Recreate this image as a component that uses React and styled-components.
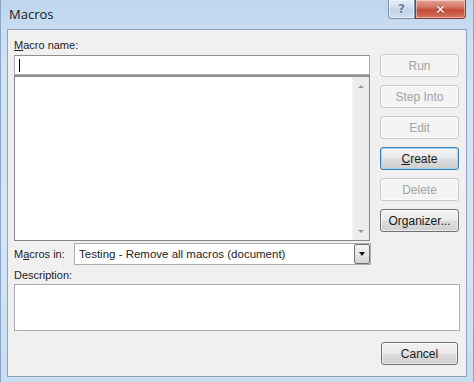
import React from 'react';
import styled, { createGlobalStyle } from 'styled-components';

const Global = createGlobalStyle`
html, body {
  margin: 0;
  padding: 0;
}
body {
  width: 474px;
  height: 382px;
  overflow: hidden;
  font-family: 'Liberation Sans', 'Noto Sans', sans-serif;
  font-size: 11px;
  color: #1e1e1e;
}
`

const Frame = styled.div`
width: 474px;
height: 382px;
box-sizing: border-box;
display: flex;
flex-direction: column;
background: linear-gradient(180deg, #bdd5ee 0%, #cfe1f3 12%, #d7e6f5 60%, #cadcf0 100%);
border-left: 1px solid #8aa6c6;
border-right: 1px solid #8aa6c6;
`

const TitleBar = styled.div`
height: 29px;
display: flex;
align-items: flex-start;
justify-content: space-between;
padding: 0 7px 0 7px;
`

const Title = styled.div`
font-family: 'Open Sans', 'Noto Sans', sans-serif;
font-size: 13px;
line-height: 29px;
color: #1a1a1a;
padding-left: 1px;
`

const Caption = styled.div`
display: flex;
`

const CaptionButton = styled.div`
width: ${p => p.$w}px;
height: 19px;
box-sizing: border-box;
display: flex;
align-items: center;
justify-content: center;
border: 1px solid ${p => p.$close ? '#8a3a34' : '#7d93ad'};
border-top: none;
background: ${p => p.$close
  ? 'linear-gradient(180deg, #e6a394 0%, #d26f5c 45%, #c24a35 55%, #d3765e 100%)'
  : 'linear-gradient(180deg, #e4eef8 0%, #cddced 45%, #bfd1e6 55%, #d4e2f0 100%)'};
border-radius: ${p => p.$close ? '0 0 4px 0' : '0 0 0 4px'};
box-shadow: inset 0 0 0 1px rgba(255,255,255,0.45);
color: ${p => p.$close ? '#ffffff' : '#6b7d92'};
font-family: 'DejaVu Sans', sans-serif;
font-weight: bold;
font-size: ${p => p.$close ? '13px' : '12px'};
text-shadow: ${p => p.$close ? '0 0 2px #6d1c10' : '0 0 2px #ffffff'};
`

const Client = styled.div`
flex: 1;
margin: 0 6px 5px 6px;
border: 1px solid #8ca2bd;
background: #f0f0f0;
box-sizing: border-box;
padding: 8px 7px 0 6px;
display: flex;
flex-direction: column;
`

const Label = styled.div`
height: 17px;
line-height: 15px;
color: #1e1e1e;
u { text-decoration: underline; }
`

const Top = styled.div`
display: flex;
gap: 10px;
`

const Left = styled.div`
width: 357px;
display: flex;
flex-direction: column;
`

const TextBox = styled.div`
height: 20px;
box-sizing: border-box;
border: 1px solid #abadb3;
border-top-color: #8e8f8f;
background: #ffffff;
display: flex;
align-items: center;
padding-left: 4px;
`

const Caret = styled.div`
width: 1px;
height: 13px;
background: #000;
`

const List = styled.div`
height: 166px;
box-sizing: border-box;
border: 1px solid #828790;
border-top: 2px solid #8e8f8f;
background: #ffffff;
display: flex;
justify-content: flex-end;
`

const ScrollBar = styled.div`
width: 16px;
background: #ececec;
border-left: 1px solid #f4f4f4;
display: flex;
flex-direction: column;
justify-content: space-between;
align-items: center;
padding: 8px 0 7px 0;
`

const Arrow = styled.div`
width: 0;
height: 0;
border-left: 3px solid transparent;
border-right: 3px solid transparent;
${p => p.$down ? 'border-top: 3px solid #9a9a9a;' : 'border-bottom: 3px solid #9a9a9a;'}
`

const Buttons = styled.div`
padding-top: 16px;
display: flex;
flex-direction: column;
gap: 8px;
`

const Button = styled.div`
width: ${p => p.$w || 79}px;
height: 23px;
box-sizing: border-box;
border-radius: 3px;
display: flex;
align-items: center;
justify-content: center;
font-size: 12px;
border: 1px solid ${p => p.$disabled ? '#c9c9c9' : p.$focus ? '#3c7fb1' : '#707070'};
background: ${p => p.$disabled
  ? '#f4f4f4'
  : 'linear-gradient(180deg, #f2f2f2 0%, #ebebeb 48%, #dddddd 52%, #cfcfcf 100%)'};
box-shadow: ${p => p.$focus ? 'inset 0 0 0 1px #9fd5f5' : 'inset 0 0 0 1px rgba(255,255,255,0.6)'};
color: ${p => p.$disabled ? '#a3a3a3' : '#1a1a1a'};
u { text-decoration: underline; }
`

const Row = styled.div`
display: flex;
align-items: center;
height: 22px;
margin-top: 2px;
`

const RowLabel = styled.div`
width: 60px;
u { text-decoration: underline; }
`

const Combo = styled.div`
width: 297px;
height: 22px;
box-sizing: border-box;
border: 1px solid #abadb3;
background: #ffffff;
display: flex;
align-items: center;
justify-content: space-between;
padding-left: 4px;
font-size: 11.5px;
`

const DropButton = styled.div`
width: 16px;
height: 20px;
box-sizing: border-box;
border: 1px solid #707070;
border-radius: 2px;
background: linear-gradient(180deg, #f2f2f2 0%, #e6e6e6 50%, #d2d2d2 100%);
display: flex;
align-items: center;
justify-content: center;
`

const DropArrow = styled.div`
width: 0;
height: 0;
border-left: 3px solid transparent;
border-right: 3px solid transparent;
border-top: 4px solid #111;
`

const DescLabel = styled(Label)`
margin-top: 3px;
height: 16px;
`

const DescBox = styled.div`
width: 446px;
height: 47px;
box-sizing: border-box;
border: 1px solid #abadb3;
background: #ffffff;
`

const Footer = styled.div`
display: flex;
justify-content: flex-end;
padding: 11px 1px 0 0;
`

export default function App() {
  return (
    <>
      <Global />
      <Frame>
        <TitleBar>
          <Title>Macros</Title>
          <Caption>
            <CaptionButton $w={27}>?</CaptionButton>
            <CaptionButton $w={51} $close>✕</CaptionButton>
          </Caption>
        </TitleBar>
        <Client>
          <Top>
            <Left>
              <Label><u>M</u>acro name:</Label>
              <TextBox><Caret /></TextBox>
              <List>
                <ScrollBar>
                  <Arrow />
                  <Arrow $down />
                </ScrollBar>
              </List>
            </Left>
            <Buttons>
              <Button $disabled>Run</Button>
              <Button $disabled>Step Into</Button>
              <Button $disabled>Edit</Button>
              <Button $focus><span><u>C</u>reate</span></Button>
              <Button $disabled>Delete</Button>
              <Button>Organizer...</Button>
            </Buttons>
          </Top>
          <Row>
            <RowLabel>M<u>a</u>cros in:</RowLabel>
            <Combo>
              <span>Testing - Remove all macros (document)</span>
              <DropButton><DropArrow /></DropButton>
            </Combo>
          </Row>
          <DescLabel>Description:</DescLabel>
          <DescBox />
          <Footer>
            <Button $w={77}>Cancel</Button>
          </Footer>
        </Client>
      </Frame>
    </>
  );
}
